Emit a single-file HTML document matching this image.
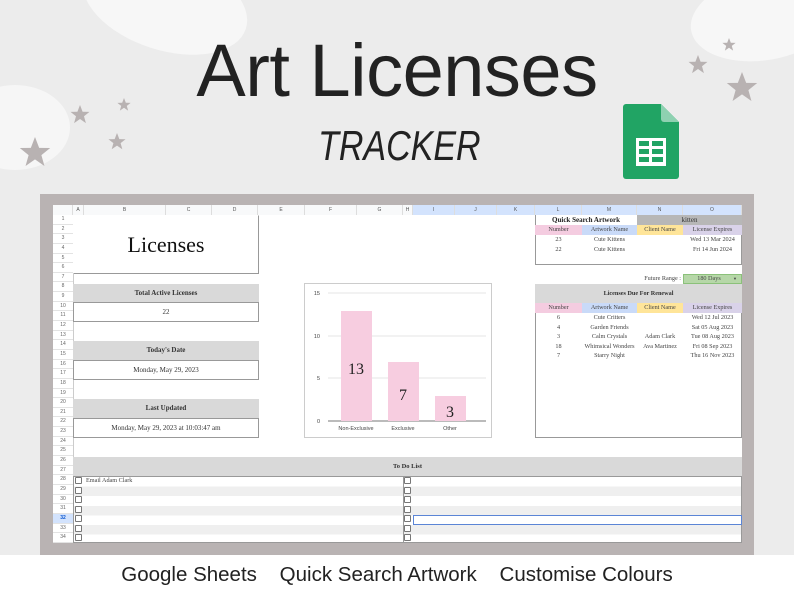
<!DOCTYPE html>
<html><head><meta charset="utf-8"><style>
*{margin:0;padding:0;box-sizing:border-box}
body{width:794px;height:596px;overflow:hidden;background:#ececec;font-family:"Liberation Serif",serif;position:relative}
.a{position:absolute}
.s{font-family:"Liberation Sans",sans-serif}
.ser{font-family:"Liberation Serif",serif;color:#333}
.ch{position:absolute;top:205px;height:10px;font:5px "Liberation Sans",sans-serif;color:#555;text-align:center;line-height:10px;border-right:1px solid #ddd;background:#f8f9fa}
.hd{background:#d9d9d9;text-align:center;font-size:7px;color:#333;font-weight:bold}
.bx{background:#fff;border:1px solid #999;text-align:center;font-size:7px;color:#333}
.t{font-size:6.2px;color:#444;text-align:center;position:absolute;line-height:9.6px}
.cb{position:absolute;width:7px;height:7px;border:1px solid #777;background:#fff;border-radius:1px}
.r{height:9.65px;line-height:9.65px;border-bottom:1px solid #e3e3e3}
</style></head><body>
<div class="a" style="left:80px;top:-45px;width:170px;height:95px;background:#f7f7f7;border-radius:50%;transform:rotate(18deg)"></div>
<div class="a" style="left:-40px;top:85px;width:110px;height:85px;background:#f6f6f6;border-radius:50%"></div>
<div class="a" style="left:690px;top:-25px;width:150px;height:85px;background:#f7f7f7;border-radius:50%;transform:rotate(-10deg)"></div>
<svg class="a" style="left:0;top:0" width="794" height="190">
<defs><polygon id="st" points="0,-10 2.6,-3.2 9.5,-3.1 4,1.3 5.9,8.1 0,4 -5.9,8.1 -4,1.3 -9.5,-3.1 -2.6,-3.2"/></defs>
<g fill="#b8b2b2">
<use href="#st" transform="translate(35,153) scale(1.6)"/>
<use href="#st" transform="translate(80,115) scale(1)"/>
<use href="#st" transform="translate(124,105) scale(.7)"/>
<use href="#st" transform="translate(117,142) scale(.9)"/>
<use href="#st" transform="translate(742,88) scale(1.6)"/>
<use href="#st" transform="translate(698,65) scale(1)"/>
<use href="#st" transform="translate(729,45) scale(.7)"/>
</g></svg>
<div class="a s" style="left:0;width:794px;top:28px;text-align:center;font-size:74px;color:#222;line-height:85px;letter-spacing:-0.5px">Art Licenses</div>
<div class="a s" style="left:2px;width:794px;top:122px;text-align:center;line-height:48px"><span style="display:inline-block;font-size:42px;font-style:italic;color:#222;transform:scaleX(.81)">TRACKER</span></div>
<svg class="a" style="left:623px;top:104px" width="56" height="76" viewBox="0 0 56 76">
<path d="M3 0H38L56 18V72a3 3 0 0 1-3 3H3a3 3 0 0 1-3-3V3a3 3 0 0 1 3-3z" fill="#21a464"/>
<path d="M38 0L56 18H41a3 3 0 0 1-3-3z" fill="#8ed1b1"/>
<rect x="13" y="34" width="30" height="28" fill="#fff"/>
<g fill="#21a464"><rect x="16" y="37" width="10" height="5"/><rect x="29" y="37" width="11" height="5"/><rect x="16" y="45" width="10" height="5"/><rect x="29" y="45" width="11" height="5"/><rect x="16" y="53" width="10" height="5"/><rect x="29" y="53" width="11" height="5"/></g>
</svg>
<div class="a" style="left:40px;top:194px;width:714px;height:361px;background:#b9b3b3"></div>
<div class="a" style="left:53px;top:205px;width:689px;height:338px;background:#fff"></div>
<div class="a" style="left:0;top:555px;width:794px;height:41px;background:#fff"></div>
<div class="a s" style="left:0;width:794px;top:563px;text-align:center;font-size:20.5px;color:#222;word-spacing:0px">Google Sheets&nbsp;&nbsp;&nbsp; Quick Search Artwork&nbsp;&nbsp;&nbsp; Customise Colours</div>
<div class="ch" style="left:53px;width:20px"></div>
<div class="ch" style="left:73px;width:11px">A</div>
<div class="ch" style="left:84px;width:82px">B</div>
<div class="ch" style="left:166px;width:46px">C</div>
<div class="ch" style="left:212px;width:46px">D</div>
<div class="ch" style="left:258px;width:47px">E</div>
<div class="ch" style="left:305px;width:52px">F</div>
<div class="ch" style="left:357px;width:46px">G</div>
<div class="ch" style="left:403px;width:10px">H</div>
<div class="ch" style="left:413px;width:42px;background:#d3e3fd">I</div>
<div class="ch" style="left:455px;width:42px;background:#d3e3fd">J</div>
<div class="ch" style="left:497px;width:38px;background:#d3e3fd">K</div>
<div class="ch" style="left:535px;width:47px;background:#d3e3fd">L</div>
<div class="ch" style="left:582px;width:55px;background:#d3e3fd">M</div>
<div class="ch" style="left:637px;width:46px;background:#d3e3fd">N</div>
<div class="ch" style="left:683px;width:59px;background:#d3e3fd">O</div>
<div class="a" style="left:53px;top:215px;width:20px">
<div style="display:flex;flex-direction:column;font:5px 'Liberation Sans',sans-serif;color:#666;text-align:center">
<div class="r">1</div><div class="r">2</div><div class="r">3</div><div class="r">4</div><div class="r">5</div><div class="r">6</div><div class="r">7</div><div class="r">8</div><div class="r">9</div><div class="r">10</div><div class="r">11</div><div class="r">12</div><div class="r">13</div><div class="r">14</div><div class="r">15</div><div class="r">16</div><div class="r">17</div><div class="r">18</div><div class="r">19</div><div class="r">20</div><div class="r">21</div><div class="r">22</div><div class="r">23</div><div class="r">24</div><div class="r">25</div><div class="r">26</div><div class="r">27</div><div class="r">28</div><div class="r">29</div><div class="r">30</div><div class="r">31</div><div class="r" style="background:#d3e3fd;color:#0b57d0;font-weight:bold">32</div><div class="r">33</div><div class="r">34</div>
</div></div>
<div class="a" style="left:73px;top:215px;width:1px;height:328px;background:#ccc"></div>
<div class="a bx" style="left:73px;top:215px;width:186px;height:59px;font-size:22px;line-height:57px;color:#111;border-color:#fff #999 #999 #fff">Licenses</div>
<div class="a hd" style="left:73px;top:284px;width:186px;height:19px;line-height:19px">Total Active Licenses</div>
<div class="a bx" style="left:73px;top:302px;width:186px;height:20px;line-height:18px">22</div>
<div class="a hd" style="left:73px;top:341px;width:186px;height:19px;line-height:19px">Today's Date</div>
<div class="a bx" style="left:73px;top:360px;width:186px;height:20px;line-height:18px">Monday, May 29, 2023</div>
<div class="a hd" style="left:73px;top:399px;width:186px;height:19px;line-height:19px">Last Updated</div>
<div class="a bx" style="left:73px;top:418px;width:186px;height:20px;line-height:18px">Monday, May 29, 2023 at 10:03:47 am</div>
<svg class="a" style="left:304px;top:283px" width="188" height="155">
<rect x="0.5" y="0.5" width="187" height="154" fill="#fff" stroke="#ccc"/>
<g stroke="#e6e6e6"><line x1="24" x2="182" y1="10" y2="10"/><line x1="24" x2="182" y1="53" y2="53"/><line x1="24" x2="182" y1="95" y2="95"/></g>
<line x1="24" x2="182" y1="138" y2="138" stroke="#777"/>
<g fill="#f7cde0"><rect x="37" y="28" width="31" height="110"/><rect x="84" y="79" width="31" height="59"/><rect x="131" y="113" width="31" height="25"/></g>
<g font-family="Liberation Sans,sans-serif" font-size="5.5" fill="#444"><text x="16" y="12" text-anchor="end">15</text><text x="16" y="55" text-anchor="end">10</text><text x="16" y="97" text-anchor="end">5</text><text x="16" y="140" text-anchor="end">0</text>
<text x="52" y="147" text-anchor="middle">Non-Exclusive</text><text x="99" y="147" text-anchor="middle">Exclusive</text><text x="146" y="147" text-anchor="middle">Other</text></g>
<g font-family="Liberation Serif,serif" font-size="16" fill="#222" text-anchor="middle"><text x="52" y="91">13</text><text x="99" y="117">7</text><text x="146" y="134">3</text></g>
</svg>
<div class="a" style="left:535px;top:215px;width:207px;height:50px;border:1px solid #999;border-top:none;background:#fff"></div>
<div class="a ser" style="left:535px;top:215px;width:102px;height:10px;line-height:10px;text-align:center;font-size:7px;font-weight:bold;color:#222">Quick Search Artwork</div>
<div class="a ser" style="left:637px;top:215px;width:105px;height:10px;line-height:10px;text-align:center;font-size:7px;background:#b7b7b7">kitten</div>
<div class="a" style="left:535px;top:225px;width:47px;height:10px;background:#f4cce0"></div>
<div class="a" style="left:582px;top:225px;width:55px;height:10px;background:#c9daf8"></div>
<div class="a" style="left:637px;top:225px;width:46px;height:10px;background:#ffe599"></div>
<div class="a" style="left:683px;top:225px;width:59px;height:10px;background:#d9d2e9"></div>
<div class="t" style="left:535px;top:225px;width:47px">Number</div><div class="t" style="left:582px;top:225px;width:55px">Artwork Name</div><div class="t" style="left:637px;top:225px;width:46px">Client Name</div><div class="t" style="left:683px;top:225px;width:59px">License Expires</div>
<div class="t" style="left:535px;top:235px;width:47px">23</div><div class="t" style="left:582px;top:235px;width:55px">Cute Kittens</div><div class="t" style="left:683px;top:235px;width:59px">Wed 13 Mar 2024</div>
<div class="t" style="left:535px;top:245px;width:47px">22</div><div class="t" style="left:582px;top:245px;width:55px">Cute Kittens</div><div class="t" style="left:683px;top:245px;width:59px">Fri 14 Jun 2024</div>
<div class="t" style="left:600px;top:274px;width:81px;text-align:right">Future Range :</div>
<div class="a" style="left:683px;top:274px;width:59px;height:10px;background:#b6d7a8;border:1px solid #8bc17a"></div>
<div class="t" style="left:683px;top:274px;width:52px">180 Days</div><div class="t" style="left:733px;top:274px;font-size:4px">▼</div>
<div class="a" style="left:535px;top:284px;width:207px;height:154px;border:1px solid #999;background:#fff"></div>
<div class="a hd" style="left:535px;top:284px;width:207px;height:19px;line-height:19px;font-size:6.2px">Licenses Due For Renewal</div>
<div class="a" style="left:535px;top:303px;width:47px;height:10px;background:#f4cce0"></div>
<div class="a" style="left:582px;top:303px;width:55px;height:10px;background:#c9daf8"></div>
<div class="a" style="left:637px;top:303px;width:46px;height:10px;background:#ffe599"></div>
<div class="a" style="left:683px;top:303px;width:59px;height:10px;background:#d9d2e9"></div>
<div class="t" style="left:535px;top:303px;width:47px">Number</div><div class="t" style="left:582px;top:303px;width:55px">Artwork Name</div><div class="t" style="left:637px;top:303px;width:46px">Client Name</div><div class="t" style="left:683px;top:303px;width:59px">License Expires</div>
<div class="t" style="left:535px;top:313px;width:47px">6</div><div class="t" style="left:582px;top:313px;width:55px">Cute Critters</div><div class="t" style="left:683px;top:313px;width:59px">Wed 12 Jul 2023</div>
<div class="t" style="left:535px;top:322.5px;width:47px">4</div><div class="t" style="left:582px;top:322.5px;width:55px">Garden Friends</div><div class="t" style="left:683px;top:322.5px;width:59px">Sat 05 Aug 2023</div>
<div class="t" style="left:535px;top:332px;width:47px">3</div><div class="t" style="left:582px;top:332px;width:55px">Calm Crystals</div><div class="t" style="left:637px;top:332px;width:46px">Adam Clark</div><div class="t" style="left:683px;top:332px;width:59px">Tue 08 Aug 2023</div>
<div class="t" style="left:535px;top:341.5px;width:47px">18</div><div class="t" style="left:578px;top:341.5px;width:63px">Whimsical Wonders</div><div class="t" style="left:637px;top:341.5px;width:46px">Ava Martinez</div><div class="t" style="left:683px;top:341.5px;width:59px">Fri 08 Sep 2023</div>
<div class="t" style="left:535px;top:351px;width:47px">7</div><div class="t" style="left:582px;top:351px;width:55px">Starry Night</div><div class="t" style="left:683px;top:351px;width:59px">Thu 16 Nov 2023</div>
<div class="a hd" style="left:73px;top:457px;width:669px;height:19px;line-height:19px;font-size:6.5px">To Do List</div>
<div class="a" style="left:73px;top:476px;width:669px;height:67px;border:1px solid #999;background:repeating-linear-gradient(#fff 0 9.6px,#efefef 9.6px 19.2px)"></div>
<div class="a" style="left:403px;top:476px;width:1px;height:67px;background:#999"></div>
<div class="a" style="left:413px;top:514.5px;width:329px;height:10px;border:1px solid #5b85d6;background:#fff"></div>
<div class="t" style="left:86px;top:476px;text-align:left">Email Adam Clark</div>
<div class="cb" style="left:75px;top:477px"></div><div class="cb" style="left:75px;top:486.5px"></div><div class="cb" style="left:75px;top:496px"></div><div class="cb" style="left:75px;top:505.5px"></div><div class="cb" style="left:75px;top:515px"></div><div class="cb" style="left:75px;top:524.5px"></div><div class="cb" style="left:75px;top:534px"></div>
<div class="cb" style="left:404px;top:477px"></div><div class="cb" style="left:404px;top:486.5px"></div><div class="cb" style="left:404px;top:496px"></div><div class="cb" style="left:404px;top:505.5px"></div><div class="cb" style="left:404px;top:515px"></div><div class="cb" style="left:404px;top:524.5px"></div><div class="cb" style="left:404px;top:534px"></div>
</body></html>
